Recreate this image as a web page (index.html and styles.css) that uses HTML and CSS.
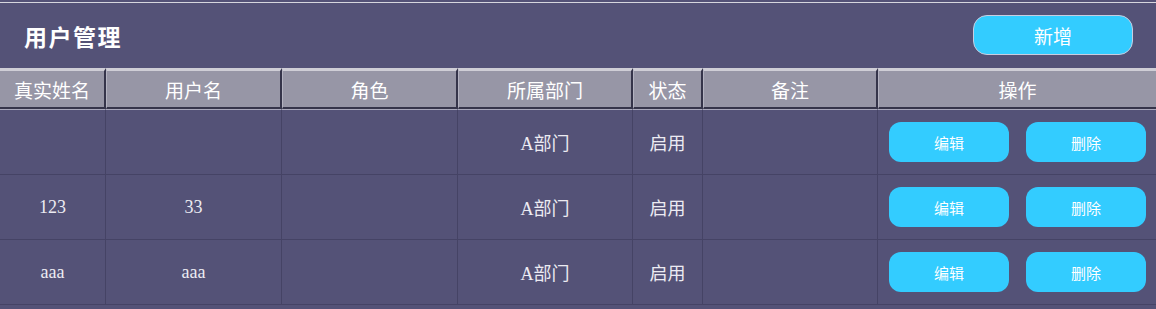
FILE: index.html
```html
<!DOCTYPE html>
<html lang="zh-CN">
<head>
<meta charset="utf-8">
<title>用户管理</title>
<link rel="stylesheet" href="styles.css">
</head>
<body>
<div class="page">
  <div class="titlebar">
    <h1 class="title">用户管理</h1>
    <button class="btn-add">新增</button>
  </div>
  <table class="grid">
    <colgroup>
      <col class="c1"><col class="c2"><col class="c3"><col class="c4"><col class="c5"><col class="c6"><col class="c7">
    </colgroup>
    <thead>
      <tr>
        <th>真实姓名</th><th>用户名</th><th>角色</th><th>所属部门</th><th>状态</th><th>备注</th><th>操作</th>
      </tr>
    </thead>
    <tbody>
      <tr>
        <td></td><td></td><td></td><td>A部门</td><td>启用</td><td></td>
        <td class="ops"><div class="ops-inner"><button class="btn">编辑</button><button class="btn">删除</button></div></td>
      </tr>
      <tr>
        <td>123</td><td>33</td><td></td><td>A部门</td><td>启用</td><td></td>
        <td class="ops"><div class="ops-inner"><button class="btn">编辑</button><button class="btn">删除</button></div></td>
      </tr>
      <tr>
        <td>aaa</td><td>aaa</td><td></td><td>A部门</td><td>启用</td><td></td>
        <td class="ops"><div class="ops-inner"><button class="btn">编辑</button><button class="btn">删除</button></div></td>
      </tr>
    </tbody>
  </table>
</div>
</body>
</html>
```
FILE: styles.css
```css
html, body {
  margin: 0;
  padding: 0;
  background: #545277;
}
.page {
  width: 1156px;
  height: 309px;
  background: #545277;
  padding-top: 2px;
  box-sizing: border-box;
}
.titlebar {
  border-top: 1px solid #d6d6de;
  height: 66px;
  display: flex;
  align-items: center;
  justify-content: space-between;
  padding: 0 23px 0 24px;
  box-sizing: border-box;
}
.title {
  margin: 0;
  font-family: "Noto Sans CJK SC", "Noto Sans", sans-serif;
  font-size: 23px;
  font-weight: 700;
  color: #ffffff;
  letter-spacing: 1.5px;
}
.btn-add {
  width: 160px;
  height: 40px;
  margin-top: -1px;
  border: 1px solid #c8cde0;
  border-radius: 14px;
  background: #33ccff;
  color: #ffffff;
  font-family: "Noto Sans CJK SC", "Noto Sans", sans-serif;
  font-size: 19px;
  padding: 0;
}
.grid {
  width: 1156px;
  table-layout: fixed;
  border-collapse: separate;
  border-spacing: 0;
}
.c1 { width: 106px; }
.c2 { width: 176px; }
.c3 { width: 176px; }
.c4 { width: 175px; }
.c5 { width: 70px; }
.c6 { width: 175px; }
.c7 { width: 278px; }
.grid th {
  height: 41px;
  padding: 0;
  background: #9796a6;
  color: #ffffff;
  font-family: "Noto Sans CJK SC", "Noto Sans", sans-serif;
  font-size: 19px;
  font-weight: 400;
  border-top: 3px solid #cfced6;
  border-left: 1px solid #b4b3c1;
  border-right: 2px solid #35344a;
  border-bottom: 2px solid #35344a;
  box-sizing: border-box;
}
.grid th:first-child { border-left: none; }
.grid th:last-child { border-right: none; }
.grid td {
  height: 64px;
  padding: 0;
  text-align: center;
  color: #ecebf2;
  font-family: "Liberation Serif", "Noto Sans CJK SC", serif;
  font-size: 18px;
  border-right: 1px solid #454365;
  border-bottom: 1px solid #454365;
}
.grid td:last-child { border-right: none; }
.grid tbody tr:first-child td { border-top: 1px solid #a9a8bb; }
.ops-inner {
  display: flex;
  gap: 17px;
  padding-left: 11px;
}
.btn {
  width: 120px;
  height: 40px;
  border: none;
  border-radius: 12px;
  background: #33ccff;
  color: #ffffff;
  font-family: "Noto Sans CJK SC", "Noto Sans", sans-serif;
  font-size: 15px;
  padding: 0;
}
```
